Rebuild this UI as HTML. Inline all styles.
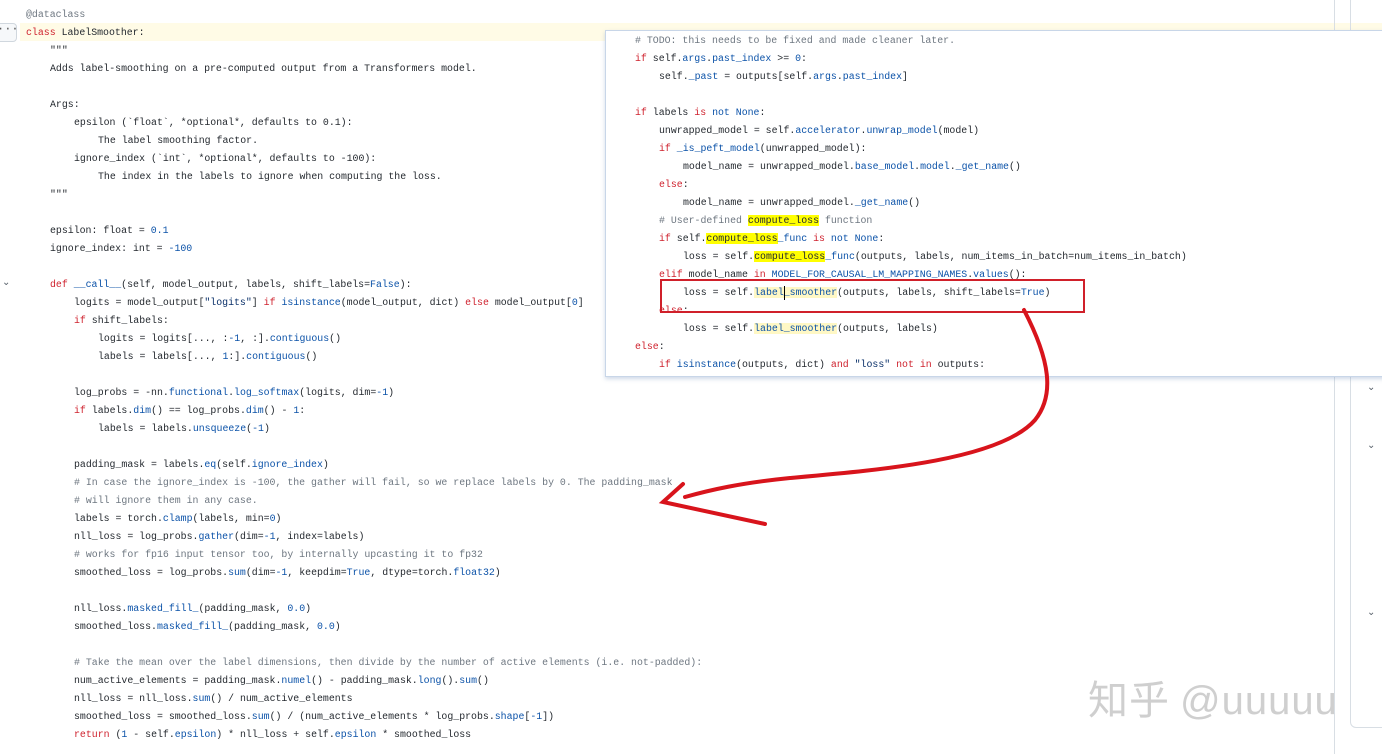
<!DOCTYPE html>
<html><head><meta charset="utf-8"><style>
body{margin:0;width:1382px;height:754px;background:#fff;position:relative;overflow:hidden;font-family:"Liberation Mono",monospace;}
.l{position:absolute;left:0;height:18px;line-height:18px;font-size:9.9px;color:#24292f;white-space:pre;margin-top:1px;}
.k{color:#cf222e}.f{color:#0b52a8}.c{color:#6e7781}.n{color:#0b52a8}.s{color:#24292f}.q{color:#0a3069}
.hl{background:#ffff00}.hy{background:#fff8c5}
#pop{position:absolute;left:605px;top:30px;width:790px;height:345px;background:#fff;border:1px solid #c8d6e8;box-shadow:0 2px 4px rgba(120,150,190,.35);}
</style></head><body>
<div style="position:absolute;left:20px;top:23px;width:1362px;height:18px;background:#fffbe6"></div>
<div style="position:absolute;left:-4px;top:23px;width:19px;height:17px;border:1px solid #d0d7de;border-radius:4px;background:#f6f8fa;font-size:12px;line-height:10px;text-align:center;color:#555">···</div>
<div style="position:absolute;left:1334px;top:0;width:1px;height:754px;background:#d8dee4"></div>
<div style="position:absolute;left:1350px;top:-5px;width:40px;height:731px;border:1px solid #d8dee4;border-radius:6px"></div>
<div style="position:absolute;left:1367px;top:382px;font-size:10px;color:#57606a">&#8964;</div>
<div style="position:absolute;left:1367px;top:440px;font-size:10px;color:#57606a">&#8964;</div>
<div style="position:absolute;left:1367px;top:607px;font-size:10px;color:#57606a">&#8964;</div>
<div style="position:absolute;left:2px;top:277px;font-size:10px;color:#57606a">&#8964;</div>

<div class="l" style="top:5px;left:26px"><span class="c">@dataclass</span></div>
<div class="l" style="top:23px;left:26px"><span class="k">class</span> LabelSmoother:</div>
<div class="l" style="top:41px;left:50px"><span class="s">"""</span></div>
<div class="l" style="top:59px;left:50px"><span class="s">Adds label-smoothing on a pre-computed output from a Transformers model.</span></div>
<div class="l" style="top:95px;left:50px"><span class="s">Args:</span></div>
<div class="l" style="top:113px;left:74px"><span class="s">epsilon (`float`, *optional*, defaults to 0.1):</span></div>
<div class="l" style="top:131px;left:98px"><span class="s">The label smoothing factor.</span></div>
<div class="l" style="top:149px;left:74px"><span class="s">ignore_index (`int`, *optional*, defaults to -100):</span></div>
<div class="l" style="top:167px;left:98px"><span class="s">The index in the labels to ignore when computing the loss.</span></div>
<div class="l" style="top:185px;left:50px"><span class="s">"""</span></div>
<div class="l" style="top:221px;left:50px">epsilon: float = <span class="n">0.1</span></div>
<div class="l" style="top:239px;left:50px">ignore_index: int = <span class="n">-100</span></div>
<div class="l" style="top:275px;left:50px"><span class="k">def</span> <span class="f">__call__</span>(self, model_output, labels, shift_labels=<span class="n">False</span>):</div>
<div class="l" style="top:293px;left:74px">logits = model_output[<span class="q">"logits"</span>] <span class="k">if</span> <span class="f">isinstance</span>(model_output, dict) <span class="k">else</span> model_output[<span class="n">0</span>]</div>
<div class="l" style="top:311px;left:74px"><span class="k">if</span> shift_labels:</div>
<div class="l" style="top:329px;left:98px">logits = logits[..., :<span class="n">-1</span>, :].<span class="f">contiguous</span>()</div>
<div class="l" style="top:347px;left:98px">labels = labels[..., <span class="n">1</span>:].<span class="f">contiguous</span>()</div>
<div class="l" style="top:383px;left:74px">log_probs = -nn.<span class="f">functional</span>.<span class="f">log_softmax</span>(logits, dim=<span class="n">-1</span>)</div>
<div class="l" style="top:401px;left:74px"><span class="k">if</span> labels.<span class="f">dim</span>() == log_probs.<span class="f">dim</span>() - <span class="n">1</span>:</div>
<div class="l" style="top:419px;left:98px">labels = labels.<span class="f">unsqueeze</span>(<span class="n">-1</span>)</div>
<div class="l" style="top:455px;left:74px">padding_mask = labels.<span class="f">eq</span>(self.<span class="f">ignore_index</span>)</div>
<div class="l" style="top:473px;left:74px"><span class="c"># In case the ignore_index is -100, the gather will fail, so we replace labels by 0. The padding_mask</span></div>
<div class="l" style="top:491px;left:74px"><span class="c"># will ignore them in any case.</span></div>
<div class="l" style="top:509px;left:74px">labels = torch.<span class="f">clamp</span>(labels, min=<span class="n">0</span>)</div>
<div class="l" style="top:527px;left:74px">nll_loss = log_probs.<span class="f">gather</span>(dim=<span class="n">-1</span>, index=labels)</div>
<div class="l" style="top:545px;left:74px"><span class="c"># works for fp16 input tensor too, by internally upcasting it to fp32</span></div>
<div class="l" style="top:563px;left:74px">smoothed_loss = log_probs.<span class="f">sum</span>(dim=<span class="n">-1</span>, keepdim=<span class="n">True</span>, dtype=torch.<span class="f">float32</span>)</div>
<div class="l" style="top:599px;left:74px">nll_loss.<span class="f">masked_fill_</span>(padding_mask, <span class="n">0.0</span>)</div>
<div class="l" style="top:617px;left:74px">smoothed_loss.<span class="f">masked_fill_</span>(padding_mask, <span class="n">0.0</span>)</div>
<div class="l" style="top:653px;left:74px"><span class="c"># Take the mean over the label dimensions, then divide by the number of active elements (i.e. not-padded):</span></div>
<div class="l" style="top:671px;left:74px">num_active_elements = padding_mask.<span class="f">numel</span>() - padding_mask.<span class="f">long</span>().<span class="f">sum</span>()</div>
<div class="l" style="top:689px;left:74px">nll_loss = nll_loss.<span class="f">sum</span>() / num_active_elements</div>
<div class="l" style="top:707px;left:74px">smoothed_loss = smoothed_loss.<span class="f">sum</span>() / (num_active_elements * log_probs.<span class="f">shape</span>[<span class="n">-1</span>])</div>
<div class="l" style="top:725px;left:74px"><span class="k">return</span> (<span class="n">1</span> - self.<span class="f">epsilon</span>) * nll_loss + self.<span class="f">epsilon</span> * smoothed_loss</div>

<div id="pop"></div>
<div class="l" style="top:31px;left:635px"><span class="c"># TODO: this needs to be fixed and made cleaner later.</span></div>
<div class="l" style="top:49px;left:635px"><span class="k">if</span> self.<span class="f">args</span>.<span class="f">past_index</span> &gt;= <span class="n">0</span>:</div>
<div class="l" style="top:67px;left:659px">self.<span class="f">_past</span> = outputs[self.<span class="f">args</span>.<span class="f">past_index</span>]</div>
<div class="l" style="top:103px;left:635px"><span class="k">if</span> labels <span class="k">is</span> <span class="f">not None</span>:</div>
<div class="l" style="top:121px;left:659px">unwrapped_model = self.<span class="f">accelerator</span>.<span class="f">unwrap_model</span>(model)</div>
<div class="l" style="top:139px;left:659px"><span class="k">if</span> <span class="f">_is_peft_model</span>(unwrapped_model):</div>
<div class="l" style="top:157px;left:683px">model_name = unwrapped_model.<span class="f">base_model</span>.<span class="f">model</span>.<span class="f">_get_name</span>()</div>
<div class="l" style="top:175px;left:659px"><span class="k">else</span>:</div>
<div class="l" style="top:193px;left:683px">model_name = unwrapped_model.<span class="f">_get_name</span>()</div>
<div class="l" style="top:211px;left:659px"><span class="c"># User-defined </span><span class="hl">compute_loss</span><span class="c"> function</span></div>
<div class="l" style="top:229px;left:659px"><span class="k">if</span> self.<span class="hl">compute_loss</span><span class="f">_func</span> <span class="k">is</span> <span class="f">not None</span>:</div>
<div class="l" style="top:247px;left:683px">loss = self.<span class="hl">compute_loss</span><span class="f">_func</span>(outputs, labels, num_items_in_batch=num_items_in_batch)</div>
<div class="l" style="top:265px;left:659px"><span class="k">elif</span> model_name <span class="k">in</span> <span class="f">MODEL_FOR_CAUSAL_LM_MAPPING_NAMES</span>.<span class="f">values</span>():</div>
<div class="l" style="top:283px;left:683px">loss = self.<span class="hy f">label_smoother</span>(outputs, labels, shift_labels=<span class="n">True</span>)</div>
<div class="l" style="top:301px;left:659px"><span class="k">else</span>:</div>
<div class="l" style="top:319px;left:683px">loss = self.<span class="hy f">label_smoother</span>(outputs, labels)</div>
<div class="l" style="top:337px;left:635px"><span class="k">else</span>:</div>
<div class="l" style="top:355px;left:659px"><span class="k">if</span> <span class="f">isinstance</span>(outputs, dict) <span class="k">and</span> <span class="q">"loss"</span> <span class="k">not in</span> outputs:</div>
<div style="position:absolute;left:784px;top:286px;width:1px;height:14px;background:#000"></div>
<div style="position:absolute;left:660px;top:279px;width:421px;height:30px;border:2px solid #d0202a"></div>

<svg style="position:absolute;left:0;top:0" width="1382" height="754"><g fill="none" stroke="#d8141c" stroke-width="4" stroke-linecap="round">
<path d="M1024 310 C1050 360 1055 395 1035 420 C1000 460 880 470 790 478 C740 483 710 490 685 497"/>
<path d="M683 484 L663 502 L765 524"/></g></svg>

<div style="position:absolute;left:1088px;top:668px;font-family:'Noto Sans CJK SC',sans-serif;font-size:40px;color:rgba(160,160,160,.5);white-space:nowrap;letter-spacing:1px">知乎 <span style="font-family:'Liberation Sans',sans-serif">@uuuuu</span></div>
</body></html>
